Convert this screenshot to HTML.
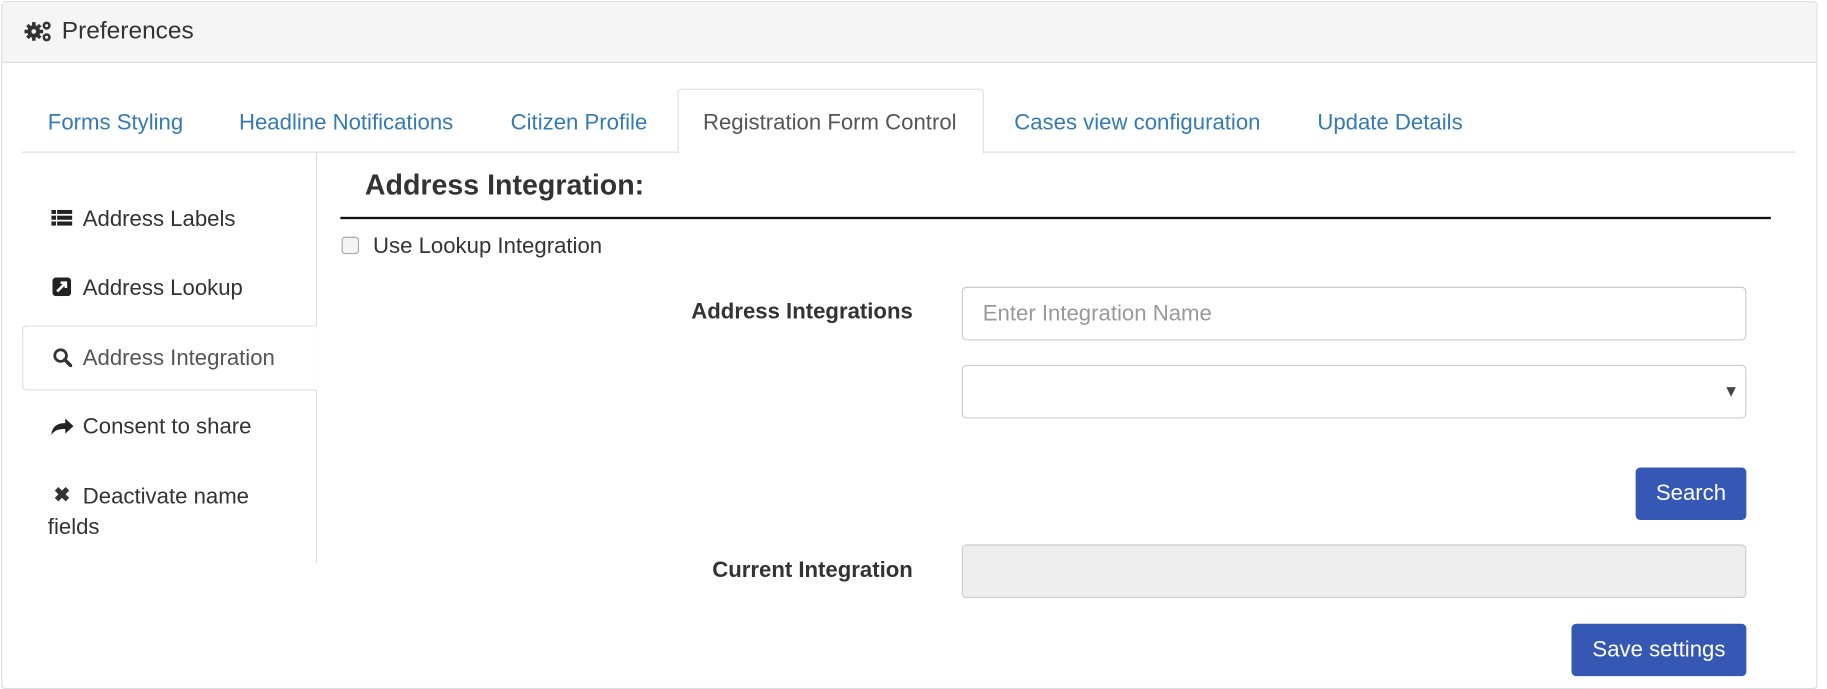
<!DOCTYPE html>
<html><head><meta charset="utf-8"><style>
*{box-sizing:border-box;margin:0;padding:0}
html,body{width:1827px;height:685px;overflow:hidden;background:#fff}
#w{position:absolute;left:0;top:0;width:1567px;height:588px;transform:scale(1.1658);transform-origin:0 0;font-family:"Liberation Sans",Arial,sans-serif;color:#333}
.a{position:absolute;white-space:nowrap}
.tab{position:absolute;top:95px;font-size:19px;color:#337ab7}
.nav{position:absolute;left:44px;font-size:19px;color:#333}
.inp{position:absolute;left:825px;width:673px;border:1px solid #ccc;border-radius:4px;background:#fff}
.btn{position:absolute;background:#3558b5;color:#fff;border-radius:4px;font-size:19px;text-align:center}
</style></head><body><div id="w">
<div class="a" style="left:1px;top:1px;width:1558px;height:590px;border:1px solid #ddd;border-radius:3px"></div>
<div class="a" style="left:2px;top:2px;width:1556px;height:52px;background:#f5f5f5;border-bottom:1px solid #ddd"></div>
<svg class="a" style="left:21px;top:17px" width="24" height="20" viewBox="0 0 24 20"><g fill="#333"><circle cx="8" cy="10" r="5.5"/><g stroke="#333" stroke-width="3"><line x1="8" y1="2" x2="8" y2="18"/><line x1="0" y1="10" x2="16" y2="10"/><line x1="2.5" y1="4.5" x2="13.5" y2="15.5"/><line x1="13.5" y1="4.5" x2="2.5" y2="15.5"/></g><circle cx="8" cy="10" r="2" fill="#f5f5f5"/><circle cx="19" cy="5" r="3.5"/><circle cx="19" cy="15" r="3.5"/><circle cx="19" cy="5" r="1.3" fill="#f5f5f5"/><circle cx="19" cy="15" r="1.3" fill="#f5f5f5"/></g></svg>
<div class="a" style="left:53px;top:15px;font-size:21px;color:#333">Preferences</div>
<div class="a" style="left:19px;top:130px;width:1521px;height:1px;background:#ddd"></div>
<div class="a" style="left:581px;top:76px;width:263px;height:56px;background:#fff;border:1px solid #ddd;border-bottom:none;border-radius:4px 4px 0 0"></div>
<div class="tab" style="left:41px">Forms Styling</div>
<div class="tab" style="left:205px">Headline Notifications</div>
<div class="tab" style="left:438px">Citizen Profile</div>
<div class="tab" style="left:603px;color:#555">Registration Form Control</div>
<div class="tab" style="left:870px">Cases view configuration</div>
<div class="tab" style="left:1130px">Update Details</div>
<div class="a" style="left:271px;top:131px;width:1px;height:352px;background:#ddd"></div>
<div class="a" style="left:19px;top:279px;width:253px;height:56px;background:#fff;border:1px solid #ddd;border-right:none;border-radius:4px 0 0 4px"></div>
<svg class="a" style="left:44px;top:180px" width="18" height="14" viewBox="0 0 18 14"><g fill="#222"><rect x="0" y="0" width="4" height="3.5"/><rect x="5" y="0" width="13" height="3.5"/><rect x="0" y="5" width="4" height="3.5"/><rect x="5" y="5" width="13" height="3.5"/><rect x="0" y="10" width="4" height="3.5"/><rect x="5" y="10" width="13" height="3.5"/></g></svg>
<div class="nav" style="left:71px;top:178px">Address Labels</div>
<svg class="a" style="left:45px;top:238px" width="16" height="16" viewBox="0 0 16 16"><rect width="16" height="16" rx="3" fill="#222"/><path d="M4 12 L11 5 M7 4.5 H11.5 V9" stroke="#fff" stroke-width="2.2" fill="none"/></svg>
<div class="nav" style="left:71px;top:237px">Address Lookup</div>
<svg class="a" style="left:45px;top:298px" width="17" height="17" viewBox="0 0 17 17"><circle cx="7" cy="7" r="5" stroke="#333" stroke-width="2.4" fill="none"/><line x1="10.5" y1="10.5" x2="15.5" y2="15.5" stroke="#333" stroke-width="3" stroke-linecap="round"/></svg>
<div class="nav" style="left:71px;top:297px;color:#555">Address Integration</div>
<svg class="a" style="left:44px;top:358px" width="19" height="16" viewBox="0 0 19 16"><path d="M0 15 C1 7 6 5 12 5 V1 L19 7.5 L12 14 V10 C6 10 3 11 0 15Z" fill="#222"/></svg>
<div class="nav" style="left:71px;top:356px">Consent to share</div>
<div class="nav" style="left:46px;top:415px;font-weight:bold;font-size:17px">✖</div>
<div class="nav" style="left:71px;top:416px">Deactivate name</div>
<div class="nav" style="left:41px;top:442px">fields</div>
<div class="a" style="left:313px;top:146px;font-size:24.5px;font-weight:bold;color:#333">Address Integration:</div>
<div class="a" style="left:292px;top:186px;width:1227px;height:2px;background:#111"></div>
<div class="a" style="left:293px;top:203px;width:15px;height:15px;border:1px solid #aaa;border-radius:3px;background:#f4f4f4"></div>
<div class="a" style="left:320px;top:201px;font-size:19px">Use Lookup Integration</div>
<div class="a" style="left:480px;width:303px;text-align:right;top:257px;font-size:19px;font-weight:bold">Address Integrations</div>
<div class="inp" style="top:246px;height:46px"><div class="a" style="left:17px;top:12px;font-size:19px;color:#999">Enter Integration Name</div></div>
<div class="inp" style="top:313px;height:46px"><div class="a" style="left:652px;top:13px;font-size:14px;color:#444">▼</div></div>
<div class="btn" style="left:1403px;top:401px;width:95px;height:45px;line-height:45px">Search</div>
<div class="a" style="left:480px;width:303px;text-align:right;top:479px;font-size:19px;font-weight:bold">Current Integration</div>
<div class="inp" style="top:467px;height:46px;background:#eee"></div>
<div class="btn" style="left:1348px;top:535px;width:150px;height:45px;line-height:45px">Save settings</div>
</div></body></html>
